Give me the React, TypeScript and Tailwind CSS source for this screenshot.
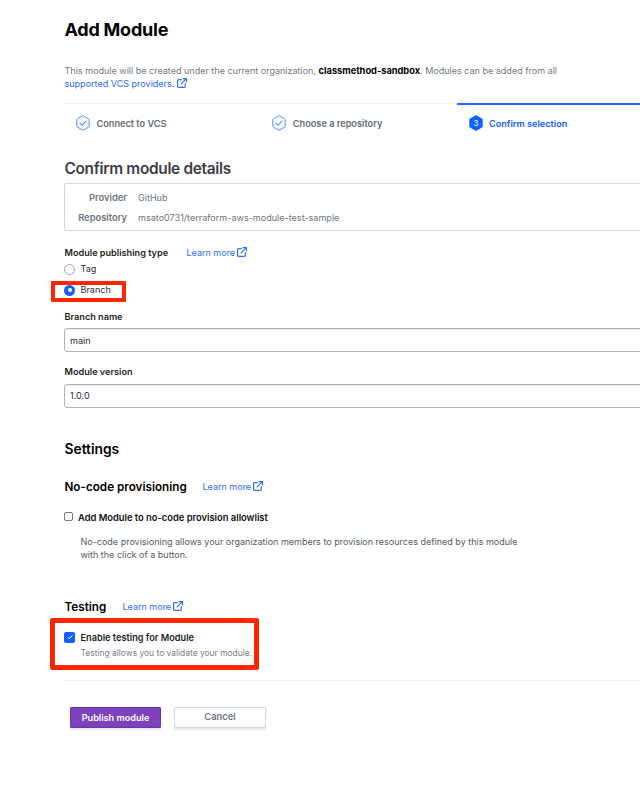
import React from "react";

function ExternalIcon({ className = "" }: { className?: string }) {
  return (
    <svg
      viewBox="0 0 10 10"
      className={`block h-[10px] w-[10px] shrink-0 ${className}`}
      fill="none"
      stroke="#2a6cff"
      strokeWidth="1.15"
      strokeLinecap="round"
      strokeLinejoin="round"
    >
      <path d="M4.3 1.6H1.5a.9.9 0 0 0-.9.9v6a.9.9 0 0 0 .9.9h5.9a.9.9 0 0 0 .9-.9V5.6" />
      <path d="M6.2.6h3.2v3.2M9.3.7 4.2 5.8" />
    </svg>
  );
}

function LearnMore({ className = "" }: { className?: string }) {
  return (
    <a className={`flex items-center text-[9px] text-[#2a6cff] ${className}`}>
      <span className="w-[48.5px] whitespace-nowrap">Learn more</span>
      <ExternalIcon className="ml-[2px] -mt-[2px]" />
    </a>
  );
}

function StepDone({ label }: { label: string }) {
  return (
    <div className="flex h-[41px] w-[196.4px] items-center border-t border-[#f3f4f6] pl-[10.4px] text-[#656a76]">
      <svg viewBox="0 0 16 16" className="-mt-[2px] h-[16px] w-[16px] shrink-0" fill="none">
        <path
          d="M7.4.9a1.2 1.2 0 0 1 1.2 0l5 2.9c.4.2.6.6.6 1v6.3c0 .4-.2.8-.6 1l-5 2.9a1.2 1.2 0 0 1-1.2 0l-5-2.9a1.2 1.2 0 0 1-.6-1V4.8c0-.4.2-.8.6-1z"
          fill="#f2f8ff"
          stroke="#4a86f7"
          strokeWidth="0.9"
        />
        <path d="m5.1 8.3 2 2 3.9-4.2" stroke="#2a6cff" strokeWidth="1" strokeLinecap="round" strokeLinejoin="round" />
      </svg>
      <span className="ml-[5.4px] whitespace-nowrap text-[9.2px] font-semibold">{label}</span>
    </div>
  );
}

function Field({ label, value }: { label: string; value: string }) {
  return (
    <div>
      <div className="-ml-[0.5px] h-[14px] text-[9.15px] font-semibold leading-[14px] text-[#1d1f24]">{label}</div>
      <div className="-ml-px mt-[4.5px] flex h-[24px] w-[620px] items-center rounded-[3px] border border-[#aeb1bd] pl-[5px] pt-px text-[9.1px] text-[#2b2d33] shadow-[inset_0_1px_1px_#f0f0f4]">
        {value}
      </div>
    </div>
  );
}

export default function App() {
  return (
    <main className="h-[800px] w-[640px] overflow-hidden bg-white pl-[65px] pt-[16px] font-['Inter','Liberation_Sans',sans-serif]">
      <h1 className="-ml-[0.5px] h-[28px] text-[18px] font-bold leading-[28px] tracking-[-0.23px] text-black">Add Module</h1>

      <div className="-ml-[0.5px] mt-[20px] whitespace-nowrap text-[9.03px] leading-[13px] text-[#747983]">
        <p>
          This module will be created under the current organization,{" "}
          <b className="text-[9.25px] font-bold text-black">classmethod-sandbox</b>. Modules can be added from all
        </p>
        <p className="flex items-center text-[#2a6cff]">
          supported VCS providers.
          <ExternalIcon className="ml-[3px] -mt-[2px]" />
        </p>
      </div>

      <div className="-ml-[0.4px] mt-[13px] flex w-[700px]">
        <StepDone label="Connect to VCS" />
        <StepDone label="Choose a repository" />
        <div className="flex h-[41px] grow items-center border-t-2 border-[#2468ff] pl-[10.4px] text-[#1060ff]">
          <svg viewBox="0 0 16 16" className="-mt-[3px] h-[16px] w-[16px] shrink-0">
            <path
              d="M7.2.6a1.5 1.5 0 0 1 1.6 0l5.2 3c.5.3.7.7.7 1.2v6.4c0 .5-.2.9-.7 1.2l-5.2 3a1.5 1.5 0 0 1-1.6 0l-5.2-3a1.4 1.4 0 0 1-.7-1.2V4.8c0-.5.2-.9.7-1.2z"
              fill="#1060ff"
            />
            <text x="8" y="10.9" textAnchor="middle" fill="#fff" fontSize="8" fontFamily="Inter">
              3
            </text>
          </svg>
          <span className="-mt-[2px] ml-[5.2px] whitespace-nowrap text-[9.15px] font-semibold">Confirm selection</span>
        </div>
      </div>

      <h2 className="-ml-[0.5px] mt-[13px] h-[23px] text-[15.4px] font-semibold leading-[23px] tracking-[-0.3px] text-[#3b3d45]">
        Confirm module details
      </h2>

      <dl className="-ml-px mt-[3px] grid h-[48px] w-[700px] grid-cols-[62px_1fr] grid-rows-[20px_20px] content-center gap-x-[11px] rounded-[2px] border border-[#d6d7db] pt-px text-[9.05px] leading-[20px] text-[#6f7480]">
        <dt className="text-right text-[9.35px] font-semibold">Provider</dt>
        <dd>GitHub</dd>
        <dt className="text-right text-[9.35px] font-semibold">Repository</dt>
        <dd>msato0731/terraform-aws-module-test-sample</dd>
      </dl>

      <section className="mt-[15px]">
        <div className="flex h-[14px] items-center">
          <span className="-ml-[0.5px] w-[122px] whitespace-nowrap text-[9.15px] font-semibold text-[#1d1f24]">
            Module publishing type
          </span>
          <LearnMore />
        </div>
        <div className="-ml-[1px] mt-[2px] flex h-[14px] items-center text-[9.05px] text-[#2b2d33]">
          <span className="h-[11px] w-[11px] rounded-full border border-[#a0a2ab] bg-white" />
          <span className="ml-[5.5px]">Tag</span>
        </div>
        <div className="-ml-[14px] mt-[5px] flex h-[21px] w-[75px] items-center rounded-[1px] border-4 border-[#ff2600] pl-[9px] text-[9.05px] text-[#2b2d33]">
          <span className="-mt-[3px] flex h-[11px] w-[11px] items-center justify-center rounded-full bg-[#1060ff]">
            <span className="h-[4px] w-[4px] rounded-full bg-white" />
          </span>
          <span className="ml-[5.5px] -mt-[4px]">Branch</span>
        </div>
      </section>

      <div className="mt-[7.5px] flex flex-col gap-[13px]">
        <Field label="Branch name" value="main" />
        <Field label="Module version" value="1.0.0" />
      </div>

      <h2 className="-ml-[0.5px] mt-[31px] h-[20px] text-[13.8px] font-semibold leading-[20px] text-black">Settings</h2>

      <div className="mt-[19px] flex h-[18px] items-center">
        <h3 className="-ml-[0.5px] w-[138px] whitespace-nowrap pt-[2px] text-[11.7px] font-semibold text-black">
          No-code provisioning
        </h3>
        <LearnMore />
      </div>

      <div className="mt-[14px] flex h-[14px] items-center">
        <span className="-ml-px -mt-px h-[9px] w-[9px] rounded-[2px] border border-[#767676] bg-white" />
        <span className="ml-[5px] mt-[2px] whitespace-nowrap text-[9.35px] font-semibold text-[#111]">
          Add Module to no-code provision allowlist
        </span>
      </div>
      <p className="ml-[15.5px] mt-[11px] whitespace-nowrap text-[9px] leading-[13px] text-[#565a63]">
        No-code provisioning allows your organization members to provision resources defined by this module
        <br />
        with the click of a button.
      </p>

      <div className="mt-[37px] flex h-[18px] items-center">
        <h3 className="-ml-[0.5px] w-[58px] whitespace-nowrap pt-[2px] text-[11.7px] font-semibold text-black">Testing</h3>
        <LearnMore />
      </div>

      <div className="-ml-[15px] mt-[2px] flex h-[52px] w-[209px] rounded-[2px] border-[5px] border-[#ff2600] pl-[10px] pt-[9px]">
        <span className="-ml-[0.6px] flex h-[11px] w-[11px] items-center justify-center rounded-[2px] bg-[#1060ff]">
          <svg viewBox="0 0 8 8" className="h-[8px] w-[8px]" fill="none" stroke="#fff" strokeWidth="1">
            <path d="m1.8 4.2 1.5 1.5 3-3.2" />
          </svg>
        </span>
        <div className="-mt-[2px] ml-[5.1px] whitespace-nowrap">
          <div className="text-[9.2px] font-semibold leading-[15px] text-[#1d1f24]">Enable testing for Module</div>
          <div className="text-[8.45px] leading-[16px] text-[#7c808a]">Testing allows you to validate your module.</div>
        </div>
      </div>

      <hr className="mt-[10px] w-[700px] border-[#f1f1f3]" />

      <div className="ml-[5px] mt-[26px] flex gap-[13px] text-[9.15px] font-semibold">
        <button className="h-[21px] w-[91px] rounded-[1px] border border-[#6b35a8] bg-[#7b42bc] pt-px text-white shadow-[0_2px_1px_#e9e9ec]">
          Publish module
        </button>
        <button className="h-[21px] w-[92px] rounded-[1px] border border-[#d3d5da] bg-white pt-px text-[9.4px] text-[#6f7480] shadow-[0_2px_1px_#e9e9ec]">
          Cancel
        </button>
      </div>
    </main>
  );
}
